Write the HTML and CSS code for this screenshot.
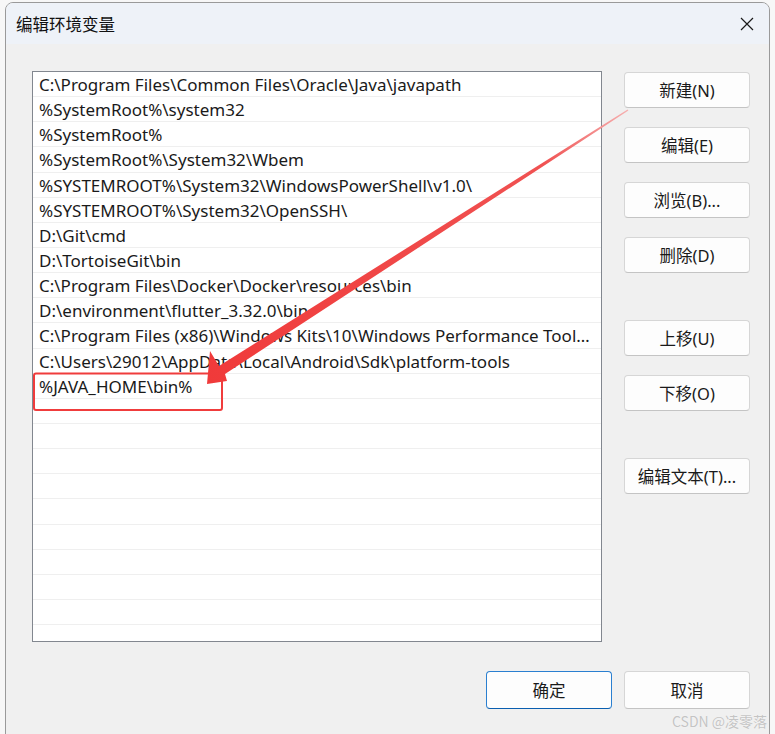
FILE: index.html
```html
<!DOCTYPE html>
<html lang="zh-CN">
<head>
    <meta charset="UTF-8">
    <title>编辑环境变量</title>
    <link rel="stylesheet" href="styles.css">
</head>
<body>
    <div class="window">
        <div class="titlebar">
            <span class="title">编辑环境变量</span>
            <svg class="close" width="14" height="14" viewBox="0 0 14 14">
                <path d="M1 1 L13 13 M13 1 L1 13" stroke="#1a1a1a" stroke-width="1.2" fill="none"/>
            </svg>
        </div>

        <div class="content">
            <div class="main">
                <div class="path-list">
                    <div class="row">C:\Program Files\Common Files\Oracle\Java\javapath</div>
                    <div class="row">%SystemRoot%\system32</div>
                    <div class="row">%SystemRoot%</div>
                    <div class="row">%SystemRoot%\System32\Wbem</div>
                    <div class="row">%SYSTEMROOT%\System32\WindowsPowerShell\v1.0\</div>
                    <div class="row">%SYSTEMROOT%\System32\OpenSSH\</div>
                    <div class="row">D:\Git\cmd</div>
                    <div class="row">D:\TortoiseGit\bin</div>
                    <div class="row">C:\Program Files\Docker\Docker\resources\bin</div>
                    <div class="row">D:\environment\flutter_3.32.0\bin</div>
                    <div class="row">C:\Program Files (x86)\Windows Kits\10\Windows Performance Toolkit\</div>
                    <div class="row">C:\Users\29012\AppData\Local\Android\Sdk\platform-tools</div>
                    <div class="row">%JAVA_HOME\bin%</div>
                    <div class="row"></div>
                    <div class="row"></div>
                    <div class="row"></div>
                    <div class="row"></div>
                    <div class="row"></div>
                    <div class="row"></div>
                    <div class="row"></div>
                    <div class="row"></div>
                    <div class="row"></div>
                    <div class="row"></div>
                </div>

                <div class="side-buttons">
                    <button class="btn">新建(N)</button>
                    <button class="btn">编辑(E)</button>
                    <button class="btn">浏览(B)...</button>
                    <button class="btn">删除(D)</button>
                    <button class="btn gap-top">上移(U)</button>
                    <button class="btn">下移(O)</button>
                    <button class="btn gap-top">编辑文本(T)...</button>
                </div>
            </div>

            <div class="footer">
                <button class="btn btn-wide btn-primary">确定</button>
                <button class="btn btn-wide">取消</button>
            </div>
        </div>
    </div>

    <!-- screenshot annotation -->
    <svg class="annotation" width="775" height="734" viewBox="0 0 775 734">
        <defs>
            <linearGradient id="fade" x1="628" y1="110" x2="210" y2="382" gradientUnits="userSpaceOnUse">
                <stop offset="0" stop-color="#f6b0b0"/>
                <stop offset="0.2" stop-color="#f05252"/>
                <stop offset="1" stop-color="#f03a3a"/>
            </linearGradient>
        </defs>
        <rect x="34" y="373.5" width="188" height="36.5" rx="2" fill="none" stroke="#f03c3c" stroke-width="2"/>
        <polygon fill="url(#fade)"
            points="628.4,110.5 225,374 227,381 207,384 210,351 219,366 627.6,109.5"/>
    </svg>

    <div class="watermark">CSDN @凌零落</div>
</body>
</html>
```

FILE: styles.css
```css
body {
    margin: 0;
    width: 775px;
    height: 734px;
    overflow: hidden;
    background: #f7f7f7;
    font-family: "Noto Sans", "Noto Sans CJK SC", sans-serif;
    color: #1a1a1a;
}

.window {
    margin: 2px 0 0 5px;
    width: 765px;
    height: 740px;
    box-sizing: border-box;
    border: 1px solid #9a9a9a;
    border-radius: 8px;
    background: #f0f0f0;
    overflow: hidden;
}

.titlebar {
    height: 41px;
    background: #eef2f8;
    display: flex;
    align-items: center;
    justify-content: space-between;
    padding: 0 15px 0 10px;
}

.title {
    font-family: "Noto Sans CJK SC", sans-serif;
    font-size: 16.5px;
    color: #111;
}

.content {
    padding: 27px 19px 0 26px;
}

.main {
    display: flex;
    gap: 22px;
    height: 571px;
}

.path-list {
    width: 571px;
    box-sizing: border-box;
    border: 1px solid #82878f;
    background: #ffffff;
    overflow: hidden;
}

.row {
    height: 25.15px;
    box-sizing: border-box;
    border-bottom: 1px solid #efefef;
    padding: 0 3px 0 6px;
    font-size: 17px;
    line-height: 25px;
    white-space: nowrap;
    overflow: hidden;
    text-overflow: ellipsis;
}

.side-buttons {
    display: flex;
    flex-direction: column;
    gap: 19px;
    padding-top: 1px;
}

.btn {
    width: 126px;
    height: 36px;
    box-sizing: border-box;
    border: 1px solid #d6d6d6;
    border-bottom-color: #c4c4c4;
    border-radius: 4px;
    background: #fdfdfd;
    font-family: "Noto Sans", "Noto Sans CJK SC", sans-serif;
    font-size: 16.5px;
    color: #1a1a1a;
    padding: 0;
}

.gap-top {
    margin-top: 28px;
}

.footer {
    display: flex;
    justify-content: flex-end;
    gap: 12px;
    margin-top: 29px;
}

.btn-wide {
    height: 38px;
}

.btn-primary {
    border-color: #2a7fd0;
    border-bottom-color: #0a5fb0;
}

.annotation {
    position: absolute;
    top: 0;
    left: 0;
    pointer-events: none;
}

.close {
    display: block;
}

.watermark {
    position: absolute;
    left: 672px;
    top: 711px;
    font-family: "Noto Sans CJK SC", sans-serif;
    font-size: 14px;
    color: #c4c4c4;
    text-shadow: 0 0 1px #ffffff;
}
```
